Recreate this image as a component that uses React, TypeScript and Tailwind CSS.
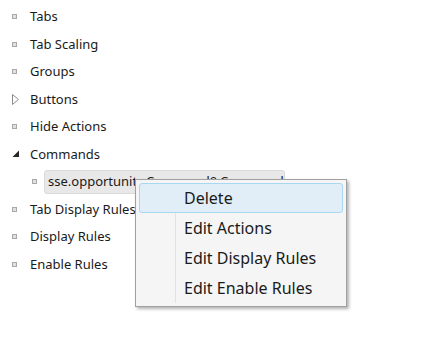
import React from "react";

type Node = { label: string; kind: "leaf" | "collapsed" | "expanded"; children?: string[] };

const tree: Node[] = [
  { label: "Tabs", kind: "leaf" },
  { label: "Tab Scaling", kind: "leaf" },
  { label: "Groups", kind: "leaf" },
  { label: "Buttons", kind: "collapsed" },
  { label: "Hide Actions", kind: "leaf" },
  { label: "Commands", kind: "expanded", children: ["sse.opportunity.Command0.Command1"] },
  { label: "Tab Display Rules", kind: "leaf" },
  { label: "Display Rules", kind: "leaf" },
  { label: "Enable Rules", kind: "leaf" },
];

const menuItems = ["Delete", "Edit Actions", "Edit Display Rules", "Edit Enable Rules"];

function Glyph({ kind }: { kind: Node["kind"] }) {
  if (kind === "collapsed") {
    return (
      <svg width="8" height="11" viewBox="0 0 8 11" className="block">
        <path d="M0.5 0.5 L6.5 5.5 L0.5 10.5 Z" fill="none" stroke="#8c8c8c" strokeWidth="1" />
      </svg>
    );
  }
  if (kind === "expanded") {
    return (
      <svg width="8" height="8" viewBox="0 0 8 8" className="block">
        <path d="M7 0.5 L7 7 L0.5 7 Z" fill="#262626" />
      </svg>
    );
  }
  return <span className="block h-[5px] w-[5px] border border-[#a8a8a8] bg-[#e0e0e0]" />;
}

function Row({ node }: { node: Node }) {
  return (
    <div className="flex h-[27.5px] items-center">
      <div className="flex w-[30px] items-center justify-start pl-[12px]">
        <Glyph kind={node.kind} />
      </div>
      <span className="text-[13px] text-[#1a1a1a]">{node.label}</span>
    </div>
  );
}

export default function App() {
  return (
    <div
      className="relative h-[361px] w-[430px] overflow-hidden bg-white"
      style={{ fontFamily: '"Noto Sans", "Open Sans", sans-serif' }}
    >
      <div className="pt-[3px]">
        {tree.map((node) => (
          <React.Fragment key={node.label}>
            <Row node={node} />
            {node.children?.map((child) => (
              <div key={child} className="flex h-[27.5px] items-center">
                <div className="flex w-[44px] items-center pl-[32px]">
                  <Glyph kind="leaf" />
                </div>
                <div className="flex h-[24px] w-[241px] items-center overflow-hidden whitespace-nowrap rounded-[3px] border border-[#dadada] bg-[#e8e8e8] pl-[3px] text-[13px] text-[#1a1a1a]">
                  {child}
                </div>
              </div>
            ))}
          </React.Fragment>
        ))}
      </div>

      <div className="absolute left-[135px] top-[179px] w-[212px] border border-[#a0a0a0] bg-[#f5f5f5] p-[3px] shadow-[2px_2px_3px_rgba(0,0,0,0.3)]">
        <div className="relative">
          <div className="absolute bottom-0 left-[36px] top-0 w-px bg-[#e2e2e2]" />
          {menuItems.map((item, i) => (
            <div
              key={item}
              className={
                i === 0
                  ? "relative flex h-[30px] items-center rounded-[3px] border border-[#a9d7f2] bg-[#e1eef8] pl-[44px] text-[16px] text-[#1a1a1a]"
                  : "relative flex h-[30px] items-center border border-transparent pl-[44px] text-[16px] text-[#1a1a1a]"
              }
            >
              {item}
            </div>
          ))}
        </div>
      </div>
    </div>
  );
}
